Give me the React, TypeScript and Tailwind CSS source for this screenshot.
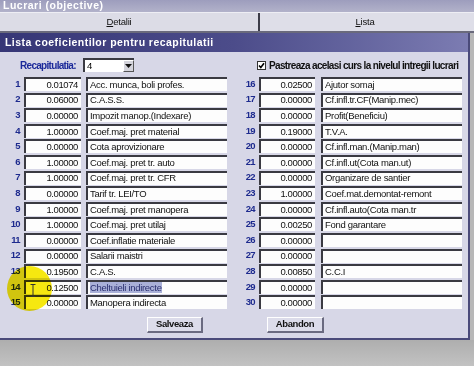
import React from "react";

const leftRows: [string, string, string][] = [
  ["1", "0.01074", "Acc. munca, boli profes."],
  ["2", "0.06000", "C.A.S.S."],
  ["3", "0.00000", "Impozit manop.(Indexare)"],
  ["4", "1.00000", "Coef.maj. pret material"],
  ["5", "0.00000", "Cota aprovizionare"],
  ["6", "1.00000", "Coef.maj. pret tr. auto"],
  ["7", "1.00000", "Coef.maj. pret tr. CFR"],
  ["8", "0.00000", "Tarif tr. LEI/TO"],
  ["9", "1.00000", "Coef.maj. pret manopera"],
  ["10", "1.00000", "Coef.maj. pret utilaj"],
  ["11", "0.00000", "Coef.inflatie materiale"],
  ["12", "0.00000", "Salarii maistri"],
  ["13", "0.19500", "C.A.S."],
  ["14", "0.12500", "Cheltuieli indirecte"],
  ["15", "0.00000", "Manopera indirecta"],
];

const rightRows: [string, string, string][] = [
  ["16", "0.02500", "Ajutor somaj"],
  ["17", "0.00000", "Cf.infl.tr.CF(Manip.mec)"],
  ["18", "0.00000", "Profit(Beneficiu)"],
  ["19", "0.19000", "T.V.A."],
  ["20", "0.00000", "Cf.infl.man.(Manip.man)"],
  ["21", "0.00000", "Cf.infl.ut(Cota man.ut)"],
  ["22", "0.00000", "Organizare de santier"],
  ["23", "1.00000", "Coef.mat.demontat-remont"],
  ["24", "0.00000", "Cf.infl.auto(Cota man.tr"],
  ["25", "0.00250", "Fond garantare"],
  ["26", "0.00000", ""],
  ["27", "0.00000", ""],
  ["28", "0.00850", "C.C.I"],
  ["29", "0.00000", ""],
  ["30", "0.00000", ""],
];

function Row({
  n,
  v,
  t,
  labelW,
  boxW,
  gap2,
  selected,
}: {
  n: string;
  v: string;
  t: string;
  labelW: string;
  boxW: string;
  gap2: string;
  selected?: boolean;
}) {
  return (
    <div className="flex h-[14px] items-stretch">
      <div
        className={`${labelW} flex items-center justify-end text-[9.5px] font-bold tracking-[-0.6px] text-[#1d2a8e]`}
      >
        {n}
      </div>
      <div
        className={`ml-[4px] ${boxW} flex items-center justify-end border-t-2 border-l-2 border-[#3a3a42] bg-[#fdfdfd] pr-[3px] text-[9.5px] tracking-[-0.4px] text-[#111]`}
      >
        {v}
      </div>
      <div
        className={`${gap2} w-[141px] flex items-center border-t-2 border-l-2 border-[#3a3a42] bg-[#fdfdfd] pl-[2px] text-[9.5px] tracking-[-0.3px] text-[#111] whitespace-nowrap overflow-hidden`}
      >
        {selected ? (
          <span className="bg-[#a9b0d8] text-[#2a2f70] leading-[11px]">{t}</span>
        ) : (
          t
        )}
      </div>
    </div>
  );
}

export default function App() {
  return (
    <div
      className="relative w-[474px] h-[366px] overflow-hidden bg-[#b8b8b8] flex flex-col"
      style={{ fontFamily: '"Liberation Sans", Arial, sans-serif' }}
    >
      {/* title bar */}
      <div className="h-[12px] shrink-0 bg-gradient-to-b from-[#9d9dbd] to-[#b2b2ca] overflow-hidden">
        <div className="pl-[3px] text-[10.5px] font-bold tracking-[0.5px] text-white leading-[11px]">
          Lucrari (objective)
        </div>
      </div>

      {/* tabs */}
      <div className="h-[21px] shrink-0 flex bg-[#dcdce6] border-t border-[#eeeef4] border-b-2 border-b-[#6a6a7c]">
        <div className="w-[258px] flex items-center justify-center text-[9.5px] tracking-[-0.2px] text-[#111] pr-[20px]">
          <span>
            <span className="underline">D</span>etalii
          </span>
        </div>
        <div className="flex-1 flex items-center justify-center border-l-2 border-[#3c3c48] bg-[#dedee8] text-[9.5px] tracking-[-0.2px] text-[#111] pr-[4px]">
          <span>
            <span className="underline">L</span>ista
          </span>
        </div>
      </div>

      {/* panel */}
      <div className="w-[470px] shrink-0 flex flex-col border-r-2 border-b-2 border-[#4a4a7a] bg-[#d7d7e7]">
        <div className="h-[19px] flex items-center bg-gradient-to-r from-[#363676] via-[#4c4c8a] to-[#7c7cb2] pl-[5px] text-[10.5px] font-bold tracking-[0.45px] text-white">
          Lista coeficientilor pentru recapitulatii
        </div>

        <div className="flex flex-col pt-[6px] pb-[5px]">
          {/* top controls */}
          <div className="flex h-[14px] items-center">
            <div className="ml-[20px] w-[63px] text-[10px] font-bold tracking-[-0.7px] text-[#1c2a9a]">
              Recapitulatia:
            </div>
            <div className="w-[51px] h-[14px] flex items-stretch border-t-2 border-l-2 border-[#3a3a42] bg-white">
              <div className="flex-1 flex items-center pl-[2px] text-[9.5px] text-black">4</div>
              <div className="w-[11px] flex items-center justify-center bg-[#d4d4dc] border-t border-l border-white border-r border-b border-r-[#555] border-b-[#555]">
                <svg width="7" height="4" viewBox="0 0 7 4">
                  <path d="M0 0 L7 0 L3.5 4 Z" fill="#111" />
                </svg>
              </div>
            </div>
            <div className="ml-[123px] w-[9px] h-[9px] border border-[#333] bg-white flex items-center justify-center">
              <svg width="7" height="7" viewBox="0 0 7 7">
                <path d="M1 3.5 L2.8 5.5 L6 1.2" stroke="#000" strokeWidth="1.6" fill="none" />
              </svg>
            </div>
            <div className="ml-[3px] text-[10px] font-bold tracking-[-0.65px] text-[#111] whitespace-nowrap">
              Pastreaza acelasi curs la nivelul intregii lucrari
            </div>
          </div>

          {/* rows */}
          <div className="mt-[5px] flex">
            <div className="flex flex-col gap-[1.6px]">
              {leftRows.map(([n, v, t]) => (
                <Row
                  key={n}
                  n={n}
                  v={v}
                  t={t}
                  labelW="w-[20px]"
                  boxW="w-[57px]"
                  gap2="ml-[5px]"
                  selected={n === "14"}
                />
              ))}
            </div>
            <div className="ml-[7px] flex flex-col gap-[1.6px]">
              {rightRows.map(([n, v, t]) => (
                <Row key={n} n={n} v={v} t={t} labelW="w-[21px]" boxW="w-[56px]" gap2="ml-[6px]" />
              ))}
            </div>
          </div>

          {/* buttons */}
          <div className="mt-[7.6px] flex h-[16px]">
            <button className="ml-[147px] w-[56px] h-[16px] flex items-center justify-center bg-[#dcdcea] border-t border-l border-white border-r-2 border-b-2 border-r-[#6a6a80] border-b-[#6a6a80] text-[9.5px] font-bold tracking-[-0.4px] text-[#111]">
              Salveaza
            </button>
            <button className="ml-[64px] w-[57px] h-[16px] flex items-center justify-center bg-[#dcdcea] border-t border-l border-white border-r-2 border-b-2 border-r-[#6a6a80] border-b-[#6a6a80] text-[9.5px] font-bold tracking-[-0.4px] text-[#111]">
              Abandon
            </button>
          </div>
        </div>
      </div>

      {/* lower desktop area */}
      <div className="flex-1 bg-gradient-to-b from-[#aeaeae] to-[#c2c2c2]" />

      {/* cursor highlight overlay */}
      <div className="absolute left-[7px] top-[266px] w-[45px] h-[45px] rounded-full bg-[#f8ea10] mix-blend-multiply" />
      <svg className="absolute left-[30px] top-[284px]" width="6" height="13" viewBox="0 0 6 13">
        <path d="M0.5 0.5 H5.5 M3 0.5 V12.5 M0.5 12.5 H5.5" stroke="#333" strokeWidth="1" fill="none" />
      </svg>
    </div>
  );
}
